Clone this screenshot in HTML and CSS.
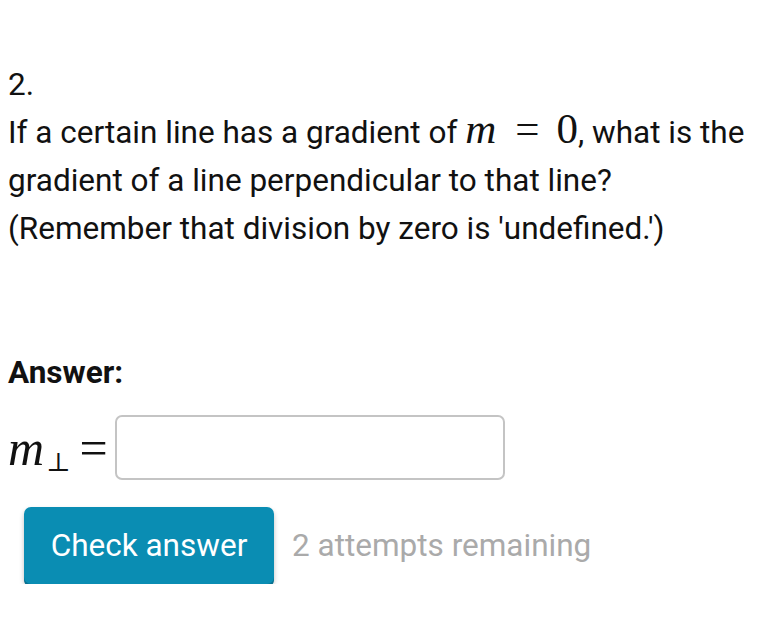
FILE: index.html
```html
<!DOCTYPE html>
<html lang="en">
<head>
    <meta charset="UTF-8">
    <meta name="viewport" content="width=device-width, initial-scale=1.0">
    <title>Question 2</title>
    <link rel="stylesheet" href="styles.css">
</head>
<body>
    <div class="question">
        <div class="number">2.</div>
        <p class="prompt">
            If a certain line has a gradient of <span class="math"><i>m</i><span class="rel">=</span>0</span>, what is the<br>
            gradient of a line perpendicular to that line?<br>
            (Remember that division by zero is 'undefined.')
        </p>

        <div class="answer-label">Answer:</div>
        <div class="answer-row">
            <span class="math big"><i>m</i><sub>&perp;</sub><span class="rel">=</span></span>
            <input type="text" class="answer-input">
        </div>

        <div class="actions">
            <button class="check-btn">Check answer</button>
            <span class="attempts">2 attempts remaining</span>
        </div>
    </div>
</body>
</html>
```

FILE: styles.css
```css
body {
    font-family: Roboto, "Noto Sans", Arial, sans-serif;
    margin: 0;
    padding: 0;
    background: white;
    color: #111;
}
.question {
    padding: 61px 8px 0 8px;
    font-size: 31.5px;
    line-height: 48px;
}
.number {
    margin: 0;
}
.prompt {
    margin: 0;
    white-space: nowrap;
}
.math {
    font-family: "Liberation Serif", "DejaVu Serif", serif;
    font-size: 43px;
    line-height: 0;
    white-space: nowrap;
}
.math i {
    padding-right: 2px;
}
.math .rel {
    margin: 0 17px 0 17px;
}
.math.big {
    font-size: 50px;
    line-height: 1;
}
.math sub {
    font-size: 26px;
    line-height: 0;
    vertical-align: -6px;
    font-style: normal;
}
.answer-label {
    font-weight: bold;
    margin-top: 96px;
}
.answer-row {
    display: flex;
    align-items: center;
    margin-top: 18px;
}
.answer-row .rel {
    margin: 0 7px 0 9px;
}
.answer-input {
    border: 2px solid #c4c4c4;
    border-radius: 7px;
    padding: 0;
    margin: 0;
    box-sizing: border-box;
    height: 65px;
    width: 390px;
    font-size: 28px;
    outline: none;
}
.actions {
    display: flex;
    align-items: center;
    margin-top: 27px;
    padding-left: 16px;
}
.check-btn {
    background: #0a8db3;
    color: white;
    border: none;
    border-radius: 7px;
    font-family: Roboto, Arial, sans-serif;
    font-size: 31.5px;
    width: 250px;
    height: 77px;
    padding: 0;
    box-shadow: 0 3px 0 #08708f, 0 3px 5px rgba(0,0,0,0.25);
}
.attempts {
    color: #aaa;
    margin-left: 18px;
}
```
